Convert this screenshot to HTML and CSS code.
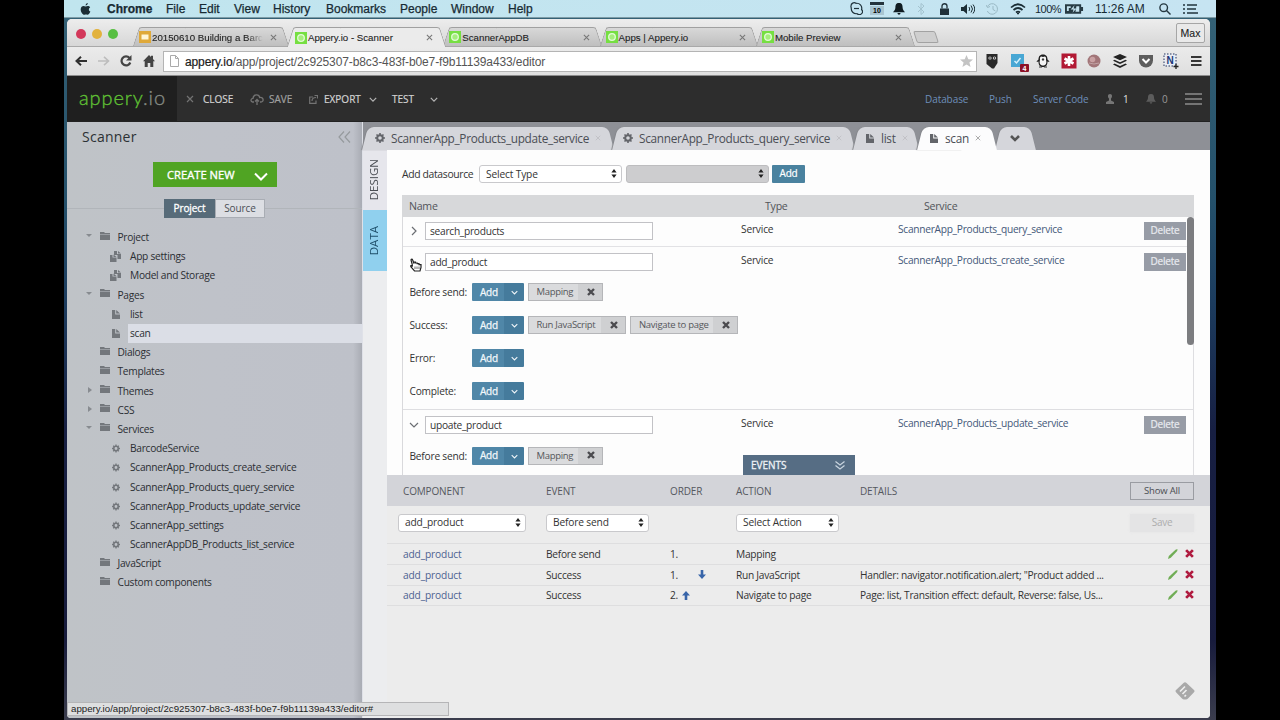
FILE: index.html
```html
<!DOCTYPE html>
<html lang="en">
<head>
<meta charset="utf-8">
<title>Appery.io - Scanner</title>
<link rel="stylesheet" href="styles.css">
</head>
<body>
<svg class="defs" aria-hidden="true">
  <symbol id="folder" viewBox="0 0 10 8"><path d="M0 0h4l1 1h5v1.500H0zM0 3h10v5H0z"/></symbol>
  <symbol id="pages" viewBox="0 0 11 11"><path d="M4 0h3v3h4v5H7.500V4H4zM0 4h2.500v2.500h4V11H0zM8 0l3 2.500H8zM3.500 3.500l3 2.500h-3z"/></symbol>
  <symbol id="page" viewBox="0 0 8 9"><path d="M0 0h3.200v4.500H8V9H0z"/><path d="M4.200 0L8 3.500H4.200z"/></symbol>
  <symbol id="gear" viewBox="0 0 10 10"><circle cx="5" cy="5" r="2.800" fill="none" stroke="currentColor" stroke-width="2"/><path d="M5 0v2M5 8v2M0 5h2M8 5h2M1.500 1.500l1.300 1.300M7.200 7.200l1.300 1.300M8.500 1.500L7.200 2.800M1.500 8.500l1.300-1.300" stroke="currentColor" stroke-width="1.600"/></symbol>
  <symbol id="down" viewBox="0 0 10 6"><path d="M1 1l4 4 4-4" fill="none" stroke="currentColor" stroke-width="1.500"/></symbol>
  <symbol id="cross" viewBox="0 0 8 8"><path d="M1 1l6 6M7 1L1 7" fill="none" stroke="currentColor" stroke-width="1.200"/></symbol>
  <symbol id="bigx" viewBox="0 0 8 8"><path d="M1 1l6 6M7 1L1 7" fill="none" stroke="currentColor" stroke-width="2.400"/></symbol>
  <symbol id="updown" viewBox="0 0 6 9"><path d="M3 0l2.600 3.600H.4zM3 9L.4 5.400h5.200z"/></symbol>
  <symbol id="pencil" viewBox="0 0 10 10"><path d="M0 10l.8-3L7.500.8 9.500 0 9.200 2 2.800 8.800z"/></symbol>
  <symbol id="fav" viewBox="0 0 12 12"><path d="M0 0h12v12H0z" fill="#76df42"/><circle cx="6" cy="6" r="3.300" fill="#a5ee7c" stroke="#e4fbd8" stroke-width="1.300"/></symbol>
  <symbol id="bell" viewBox="0 0 12 12"><path d="M6 0c3 0 3.600 2 3.600 4.500S11 8 12 9.300H0C1 8 2.400 7 2.400 4.500S3 0 6 0zM4.500 10h3c0 2.300-3 2.300-3 0z"/></symbol>
</svg>
<div class="desktop">
  <div class="menubar">
    <nav class="menus">
      <svg class="apple" viewBox="0 0 12 13"><path d="M8.500 0c0 1.500-1 2.700-2.400 2.800C6 1.300 7.200.2 8.500 0zM11.300 9.300C10.500 11.500 9.300 13 8 12.800c-.9-.4-2-.4-3 0C3 13.300.5 9.500.8 6.500 1 3.500 3.500 2.500 6.200 3.900c2-1.100 4-.6 4.900.7-2.100 1.400-1.800 3.800.2 4.700z"/></svg>
      <b>Chrome</b><span>File</span><span>Edit</span><span>View</span><span>History</span><span>Bookmarks</span><span>People</span><span>Window</span><span>Help</span>
    </nav>
    <div class="status">
      <svg width="13" height="13" viewBox="0 0 13 13" fill="none" stroke="#20333c" stroke-width="1.200"><path d="M1 4a3.200 3.200 0 0 1 5-2.700A5 5 0 0 1 11.600 7.500 3 3 0 0 1 7 11.700 5 5 0 0 1 1.300 6 3 3 0 0 1 1 4z"/><path d="M4 6.500h5"/></svg>
      <svg class="s-cal" width="14" height="13" viewBox="0 0 14 13"><path d="M0 0h14v3H0z" fill="#24343d"/><path d="M0 4h14v9H0z" fill="#a9c5d1"/><text x="7" y="10.500" text-anchor="middle">10</text></svg>
      <svg class="s-bell" width="12" height="12" fill="#101c22"><use href="#bell"/></svg>
      <svg class="s-bt" width="8" height="12" viewBox="0 0 8 12" fill="none" stroke="#a4c3cf"><path d="M1 3l6 6-3 2.500V.5L7 3 1 9"/></svg>
      <svg class="s-lock" width="9" height="12" viewBox="0 0 9 12"><path d="M0 5.500h9V12H0z" fill="#203039"/><path d="M2 5.500V3c0-3 5-3 5 0v2.500" fill="none" stroke="#203039" stroke-width="1.300"/></svg>
      <svg class="s-snd" width="14" height="10" viewBox="0 0 14 10"><path d="M0 3h2.500L6 0v10L2.500 7H0z" fill="#1b2d35"/><path d="M8 3q1.500 2 0 4M10 1.500q3 3.500 0 7M12 .5q3.500 4.500 0 9" fill="none" stroke="#1b2d35"/></svg>
      <svg class="s-clock" width="13" height="12" viewBox="0 0 13 12" fill="none" stroke="#9ab9c5"><path d="M1.500 3.500a5.300 5.300 0 1 1-.2 4.500M0 2l1.500 2.500L4 3.500M7 3v3.500l2.500 1.500"/></svg>
      <svg class="s-wifi" width="16" height="12" viewBox="0 0 16 12" fill="none" stroke="#1b2d35" stroke-width="1.700"><path d="M1 4.500q7-6.500 14 0M3.500 7q4.500-4 9 0M6 9.500q2-1.700 4 0"/><path d="M7 10.500h2"/></svg>
      <span class="pct">100%</span>
      <svg width="19" height="10" viewBox="0 0 20 10"><path d="M0 0h17v3h2v4h-2v3H0z" fill="#273b44"/><path d="M2 2h4v2H4v3H2M12 2h3v6h-4M10 1L6 5.500h3L8 9l4-4.500H9z" fill="#c3e1ed"/></svg>
      <span class="time">11:26 AM</span>
      <svg class="s-find" width="12" height="12" viewBox="0 0 12 12" fill="none" stroke="#243740" stroke-width="1.400"><circle cx="4.700" cy="4.700" r="3.800"/><path d="M7.500 7.500L11.500 11.500"/></svg>
      <svg class="s-list" width="15" height="10" viewBox="0 0 15 10" stroke="#20333c" stroke-width="1.500"><path d="M0 1h2M0 5h2M0 9h2M4 1h10M4 5h9M4 9h11"/></svg>
    </div>
  </div>

  <div class="window">
    <div class="tabstrip">
      <div class="lights"><i class="r"></i><i class="y"></i><i class="g"></i></div>
      <div class="btab t1"><svg class="fav" viewBox="0 0 12 12"><path d="M0 0h12v12H0z" fill="#dfa93a"/><path d="M2.500 3.500h7v5h-7z" fill="#fff6d8"/></svg><span class="fade">20150610 Building a Barc</span><svg class="x"><use href="#cross"/></svg></div>
      <div class="btab active"><svg class="fav"><use href="#fav"/></svg><span>Appery.io - Scanner</span><svg class="x"><use href="#cross"/></svg></div>
      <div class="btab"><svg class="fav"><use href="#fav"/></svg><span>ScannerAppDB</span><svg class="x"><use href="#cross"/></svg></div>
      <div class="btab"><svg class="fav"><use href="#fav"/></svg><span>Apps | Appery.io</span><svg class="x"><use href="#cross"/></svg></div>
      <div class="btab"><svg class="fav"><use href="#fav"/></svg><span>Mobile Preview</span><svg class="x"><use href="#cross"/></svg></div>
      <div class="newtab"></div>
      <div class="user">Max</div>
    </div>
    <div class="toolbar">
      <div class="nav">
        <svg width="12" height="10" viewBox="0 0 12 10" fill="none" stroke="#303030" stroke-width="2"><path d="M12 5H2M6 .8L1.500 5 6 9.200"/></svg>
        <svg width="12" height="10" viewBox="0 0 12 10" fill="none" stroke="#bdbdbd" stroke-width="1.600"><path d="M0 5h10M6 .8L10.500 5 6 9.200"/></svg>
        <svg width="12" height="12" viewBox="0 0 12 12"><path d="M9.500 3A4.500 4.500 0 1 0 10.300 7.500" fill="none" stroke="#444" stroke-width="2.200"/><path d="M11.500 0v5.500H6z" fill="#444"/></svg>
        <svg width="12" height="12" viewBox="0 0 12 12" fill="#444"><path d="M6 0l2 2V.7h2V4l2 2.200h-1.700V12H7.300V8H4.700v4H1.700V6.200H0z"/></svg>
      </div>
      <div class="url">
        <svg width="9" height="12" viewBox="0 0 9 12" fill="#fff" stroke="#aaa"><path d="M.5.5h5l3 3v8h-8zM5.500.5v3h3"/></svg>
        <span class="addr"><b>appery.io</b>/app/project/2c925307-b8c3-483f-b0e7-f9b11139a433/editor</span>
        <svg width="13" height="12" viewBox="0 0 13 12" fill="#c4c4c4"><path d="M6.500 0l1.800 4.200 4.700.3-3.600 2.900L10.600 12 6.500 9.400 2.400 12l1.200-4.600L0 4.500l4.700-.3z"/></svg>
      </div>
      <div class="exts">
        <svg viewBox="0 0 16 16"><path d="M2.500 1h11v9l-3.500 5.500H8L2.500 11z" fill="#292929"/><circle cx="6" cy="5" r="1.600" fill="#ddd"/><circle cx="10.500" cy="5" r="1.600" fill="#ddd"/><circle cx="6" cy="5" r=".7"/><circle cx="10.500" cy="5" r=".7"/></svg>
        <svg class="ov" viewBox="0 0 16 16"><path d="M1 1h13v13H1z" fill="#48a7d4"/><path d="M4.500 8l2 2 4-5" fill="none" stroke="#d6f0fb" stroke-width="1.500"/><rect x="10" y="11" width="9" height="8" rx="1" fill="#8c1127"/><text class="bad" x="14.500" y="17.500" text-anchor="middle">4</text></svg>
        <svg viewBox="0 0 16 16"><path d="M8 1.500c3.500 0 4.500 2.500 4.500 5 0 0 1.500 1 2 2.500l-2-.5c0 3-1 5.500-4.500 5.500s-4.500-2.500-4.500-5.500L1.500 9c.5-1.500 2-2.500 2-2.500 0-2.500 1-5 4.500-5z" fill="#1d1d1d"/><path d="M8 4c2.500-1.500 3.500.5 3 3 1 3 0 5.500-3 5.500S4 10 5 7c-.5-2.500.5-4.500 3-3z" fill="#f4f4f4"/><path d="M7 6h2L8 7.500zM4 14h3M9 14h3" fill="#222" stroke="#333"/></svg>
        <svg viewBox="0 0 16 16"><path d="M.5.500h15v15H.5z" fill="#b21934"/><path d="M8 3v10M3.500 5.500l9 5M12.500 5.500l-9 5" stroke="#fff" stroke-width="2.600"/></svg>
        <svg viewBox="0 0 16 16"><circle cx="8" cy="8" r="6.500" fill="#a27679"/><circle cx="6.500" cy="6.500" r="2.800" fill="#c9a1a3"/><path d="M3 10q5 2 10 0" stroke="#c2a3a5" fill="none"/></svg>
        <svg viewBox="0 0 16 16" fill="#242424"><path d="M8 1l7 3-7 3.200L1 4zM2.500 6.700L8 9.200l5.500-2.500L15 7.700 8 11 1 7.700zM2.500 10.400L8 12.900l5.500-2.500 1.500 1L8 15l-7-3.600z"/></svg>
        <svg viewBox="0 0 16 16"><path d="M1 2h14v5.500a7 7 0 0 1-14 0z" fill="#5d5d5d"/><path d="M4.500 6L8 9.500 11.500 6" fill="none" stroke="#fff" stroke-width="2"/></svg>
        <svg viewBox="0 0 16 16"><path d="M1 1h12v12H1z" fill="#e8edf5" stroke="#27355f" stroke-dasharray="1.500 1.500"/><text class="en" x="7.200" y="11" text-anchor="middle">N</text><path d="M13 11v5M10.500 13.500h5" stroke="#222" stroke-width="1.300"/></svg>
        <svg viewBox="0 0 16 16" stroke="#363636" stroke-width="2"><path d="M2 4h10.500M2 8h10.500M2 12h10.500"/></svg>
      </div>
    </div>

    <header class="apphead">
      <div class="logo">appery<span>.io</span></div>
      <div class="acts">
        <svg class="dim" width="8" height="8"><use href="#cross"/></svg><span class="a-close">CLOSE</span>
        <svg class="dim" width="14" height="11" viewBox="0 0 14 11" fill="none" stroke="currentColor" stroke-width="1.300"><path d="M4 8H2.500C.3 7.500.5 4.500 3 4.300 3.500 0 9 0 9.700 3.500 14 3 14 8 11 8h-1M7 11V5.500M5 7.500l2-2 2 2"/></svg><span class="a-save">SAVE</span>
        <svg class="dim" width="9" height="9" viewBox="0 0 9 9" fill="none" stroke="currentColor" stroke-width="1.200"><path d="M4 2H.700v6.300H7V5.500M3 6c0-3 2-3.500 4-3.500M5.500.5h3v3"/></svg><span class="a-exp">EXPORT</span>
        <svg class="dn" width="8" height="5"><use href="#down"/></svg><span class="a-test">TEST</span>
        <svg class="dn" width="8" height="5"><use href="#down"/></svg>
      </div>
      <div class="headlinks">
        <a class="h-db">Database</a><a class="h-push">Push</a><a class="h-sc">Server Code</a>
        <svg width="8" height="10" viewBox="0 0 8 10" fill="#767676"><path d="M4 0c2.500 0 2.500 3 1 4.500v2L8 8v2H0V8l3-1.500v-2C1.500 3 1.500 0 4 0z"/></svg><span class="h-1">1</span>
        <svg width="10" height="10" viewBox="0 0 12 12" fill="#5c5c5c"><use href="#bell" width="12" height="12"/></svg><span class="h-0">0</span>
        <svg width="17" height="14" viewBox="0 0 17 14" stroke="#747474" stroke-width="2"><path d="M0 2h17M0 7h17M0 12h17"/></svg>
      </div>
    </header>

    <div class="app">
      <aside class="side">
        <div class="sidetop"><h1>Scanner</h1><svg width="13" height="12" viewBox="0 0 13 12" fill="none" stroke="#969a9d" stroke-width="1.200"><path d="M6 .5L1 6l5 5.500M12 .5L7 6l5 5.500"/></svg></div>
        <div class="create"><span>CREATE NEW</span><svg width="14" height="9" viewBox="0 0 14 9" fill="none" stroke="#fff" stroke-width="2"><path d="M1 1.500l6 6 6-6"/></svg></div>
        <div class="toggle"><span class="on">Project</span><span>Source</span></div>
        <ul class="tree">
          <li class="l1 open"><svg><use href="#folder"/></svg><span>Project</span></li>
          <li class="l2 pp"><svg><use href="#pages"/></svg><span>App settings</span></li>
          <li class="l2 pp"><svg><use href="#pages"/></svg><span>Model and Storage</span></li>
          <li class="l1 open"><svg><use href="#folder"/></svg><span>Pages</span></li>
          <li class="l2"><svg><use href="#page"/></svg><span>list</span></li>
          <li class="l2 sel"><svg><use href="#page"/></svg><span>scan</span></li>
          <li class="l1"><svg><use href="#folder"/></svg><span>Dialogs</span></li>
          <li class="l1"><svg><use href="#folder"/></svg><span>Templates</span></li>
          <li class="l1 shut"><svg><use href="#folder"/></svg><span>Themes</span></li>
          <li class="l1 shut"><svg><use href="#folder"/></svg><span>CSS</span></li>
          <li class="l1 open"><svg><use href="#folder"/></svg><span>Services</span></li>
          <li class="l2"><svg><use href="#gear"/></svg><span>BarcodeService</span></li>
          <li class="l2"><svg><use href="#gear"/></svg><span>ScannerApp_Products_create_service</span></li>
          <li class="l2"><svg><use href="#gear"/></svg><span>ScannerApp_Products_query_service</span></li>
          <li class="l2"><svg><use href="#gear"/></svg><span>ScannerApp_Products_update_service</span></li>
          <li class="l2"><svg><use href="#gear"/></svg><span>ScannerApp_settings</span></li>
          <li class="l2"><svg><use href="#gear"/></svg><span>ScannerAppDB_Products_list_service</span></li>
          <li class="l1"><svg><use href="#folder"/></svg><span>JavaScript</span></li>
          <li class="l1"><svg><use href="#folder"/></svg><span>Custom components</span></li>
        </ul>
      </aside>

      <main class="main">
        <div class="etabs">
          <div class="etab e1"><svg class="ic"><use href="#gear"/></svg><span>ScannerApp_Products_update_service</span><svg class="ex faint"><use href="#cross"/></svg></div>
          <div class="etab e2"><svg class="ic"><use href="#gear"/></svg><span>ScannerApp_Products_query_service</span><svg class="ex faint"><use href="#cross"/></svg></div>
          <div class="etab e3"><svg class="ic pg"><use href="#page"/></svg><span>list</span><svg class="ex faint"><use href="#cross"/></svg></div>
          <div class="etab e4 cur"><svg class="ic pg"><use href="#page"/></svg><span>scan</span><svg class="ex"><use href="#cross"/></svg></div>
          <div class="etab e5"><svg width="10" height="7" viewBox="0 0 10 7" fill="none" stroke="#555" stroke-width="2.600"><path d="M1 1l4 4 4-4"/></svg></div>
        </div>
        <div class="work">
          <div class="modes"><div class="mode"><span>DESIGN</span></div><div class="mode data"><span>DATA</span></div></div>
          <div class="content">
            <section class="sources">
              <div class="adder"><span class="lbl">Add datasource</span><div class="select w142">Select Type<svg><use href="#updown"/></svg></div><div class="select off w143"><svg><use href="#updown"/></svg></div><div class="btn">Add</div></div>
              <div class="table">
                <div class="thead"><span>Name</span><span class="c-type">Type</span><span>Service</span></div>
                <div class="rows">
                  <div class="row"><svg class="right" viewBox="0 0 6 10"><path d="M1 1l4 4-4 4"/></svg><div class="field">search_products</div><span class="svc">Service</span><a>ScannerApp_Products_query_service</a><div class="del">Delete</div></div>
                  <div class="group">
                    <div class="row"><i></i><div class="field">add_product</div><span class="svc">Service</span><a>ScannerApp_Products_create_service</a><div class="del">Delete</div></div>
                    <div class="ev"><span>Before send:</span><div class="split">Add<svg><use href="#down"/></svg></div><div class="chip m">Mapping<svg><use href="#bigx"/></svg></div></div>
                    <div class="ev"><span>Success:</span><div class="split">Add<svg><use href="#down"/></svg></div><div class="chip js">Run JavaScript<svg><use href="#bigx"/></svg></div><div class="chip n">Navigate to page<svg><use href="#bigx"/></svg></div></div>
                    <div class="ev"><span>Error:</span><div class="split">Add<svg><use href="#down"/></svg></div></div>
                    <div class="ev"><span>Complete:</span><div class="split">Add<svg><use href="#down"/></svg></div></div>
                  </div>
                  <div class="row third"><svg class="dnv" viewBox="0 0 10 6"><path d="M1 1l4 4 4-4"/></svg><div class="field">upoate_product</div><span class="svc">Service</span><a>ScannerApp_Products_update_service</a><div class="del">Delete</div></div>
                  <div class="ev last"><span>Before send:</span><div class="split">Add<svg><use href="#down"/></svg></div><div class="chip m">Mapping<svg><use href="#bigx"/></svg></div></div>
                  <div class="thumb"></div>
                </div>
              </div>
              <div class="evtab"><span>EVENTS</span><svg width="10" height="9" viewBox="0 0 10 9" fill="none" stroke="#c9d5df" stroke-width="1.200"><path d="M.5.500L5 4 9.500.5M.5 4.500L5 8l4.500-3.500"/></svg></div>
            </section>
            <section class="events">
              <div class="erow ehead"><span>COMPONENT</span><span>EVENT</span><span>ORDER</span><span>ACTION</span><span>DETAILS</span><div class="showall">Show All</div></div>
              <div class="erow epick"><div class="select w127">add_product<svg><use href="#updown"/></svg></div><div class="select w103">Before send<svg><use href="#updown"/></svg></div><span></span><div class="select w103">Select Action<svg><use href="#updown"/></svg></div><span></span><div class="save">Save</div></div>
              <div class="erow"><a>add_product</a><span>Before send</span><span>1.</span><span>Mapping</span><span></span><div class="tools"><svg class="pen"><use href="#pencil"/></svg><svg class="rm"><use href="#bigx"/></svg></div></div>
              <div class="erow"><a>add_product</a><span>Success</span><span class="ord">1.<svg class="dwn" viewBox="0 0 8 9"><path d="M2.700 0h2.600v4.500H8L4 9 0 4.500h2.700z"/></svg></span><span>Run JavaScript</span><span>Handler: navigator.notification.alert; "Product added ...</span><div class="tools"><svg class="pen"><use href="#pencil"/></svg><svg class="rm"><use href="#bigx"/></svg></div></div>
              <div class="erow"><a>add_product</a><span>Success</span><span class="ord">2.<svg class="up" viewBox="0 0 8 9"><path d="M2.700 9h2.600V4.500H8L4 0 0 4.500h2.700z"/></svg></span><span>Navigate to page</span><span>Page: list, Transition effect: default, Reverse: false, Us...</span><div class="tools"><svg class="pen"><use href="#pencil"/></svg><svg class="rm"><use href="#bigx"/></svg></div></div>
              <svg class="feedly" viewBox="0 0 20 18"><path d="M8.500 1q1.500-1.500 3 0L19 8q1 1.200 0 2.300L13 16.500q-1 1-2 1H9q-1 0-2-1L1 10.300Q0 9 1 8z" fill="#a9a9a9"/><path d="M5 9.500l5-5M7.500 12l4-4M9.500 14.500l1.500-1.500" stroke="#eee" stroke-width="1.700"/></svg>
            </section>
          </div>
        </div>
      </main>
    </div>
    <div class="statusurl">appery.io/app/project/2c925307-b8c3-483f-b0e7-f9b11139a433/editor#</div>
  </div>
  <svg class="hand" viewBox="0 0 12 13"><path d="M2 5L1 1.500C1 .3 2.300.3 2.700 1.500L4 5V3.500h1.500v1h1.700v.7H9v1h2V9l-1 3.500H4.500L1 8.500C0 7 1.500 6.500 2.500 8z" fill="#fff" stroke="#222" stroke-width="1.200"/><path d="M5 8v2.500M7 8v2.500M9 8v2.500" stroke="#444" stroke-width=".8"/></svg>
</div>
</body>
</html>
```

FILE: styles.css
```css
* { box-sizing: border-box; }
body { margin: 0; width: 1280px; height: 720px; overflow: hidden; background: #000; font: 10.6px "Open Sans", "Noto Sans", sans-serif; color: #333; }
svg { flex: none; display: block; }
.defs { position: absolute; width: 0; height: 0; }
.desktop { position: relative; width: 1152px; height: 720px; margin: 0 64px; overflow: hidden; background: linear-gradient(#356276 0, #24506a 200px, #1c3c5e 300px, #171f42 430px, #171b3c 640px, #3b3d4d); display: flex; flex-direction: column; }
.menubar { height: 18px; background: linear-gradient(90deg, #c0e5ee, #c6e4f2); border-bottom: 1px solid #7f9ca6; display: flex; justify-content: space-between; font: 12px/18px "Liberation Sans", Arial, sans-serif; color: #172a33; -webkit-text-stroke: .25px #172a33; }
.menus { display: grid; grid-template-columns: 43px 59px 33px 35px 39px 53px 74px 51px 57px 40px; white-space: nowrap; }
.apple { width: 11px; height: 12px; margin: 3px 0 0 16px; fill: #1c2d35; }
.status { display: flex; align-items: center; margin-right: 18px; white-space: nowrap; -webkit-text-stroke: 0; }
.s-cal { margin-left: 7px; }
.s-cal text { font: bold 7px "Liberation Sans", sans-serif; }
.s-bell { margin-left: 9px; }
.s-bt { margin-left: 12px; }
.s-lock { margin-left: 15px; }
.s-snd { margin-left: 12px; }
.s-clock { margin-left: 11px; }
.s-wifi { margin-left: 11px; }
.pct { font-size: 11px; margin: 0 4px 0 9px; width: 26px; letter-spacing: -.5px; }
.time { margin-left: 11px; width: 50px; }
.s-find { margin-left: 14px; }
.s-list { margin-left: 12px; }

.window { position: relative; width: 1143px; height: 699px; margin: 1px 0 0 3px; border-radius: 5px 5px 4px 4px; overflow: hidden; background: #ececec; display: flex; flex-direction: column; }
.tabstrip { height: 28px; background: linear-gradient(#ededed, #d7d7d7); border-bottom: 1px solid #a9a9a9; display: flex; align-items: flex-end; font: 9.700px "Liberation Sans", Arial, sans-serif; color: #1c1c1c; -webkit-text-stroke: .1px #222; }
.lights { display: flex; gap: 6px; align-self: center; width: 67px; padding: 3px 0 0 9px; }
.lights i { width: 10px; height: 10px; border-radius: 50%; }
.r { background: #d3385a; } .y { background: #e2b23d; } .g { background: #57bf42; }
.btab { position: relative; z-index: 0; width: 156.300px; height: 19px; padding: 1px 11px 0 5px; display: flex; align-items: center; white-space: nowrap; }
.btab::before, .btab::after { content: ""; position: absolute; z-index: -1; top: 0; bottom: 0; border-top: 1px solid #a0a0a0; background: linear-gradient(#d8d8d8, #bfbfbf); }
.btab::before { left: 2px; right: 35%; transform: skewX(-18deg); border-left: 1px solid #a0a0a0; border-radius: 3px 0 0 0; }
.btab::after { right: 2px; left: 35%; transform: skewX(18deg); border-right: 1px solid #a0a0a0; border-radius: 0 3px 0 0; }
.btab.t1 { width: 154px; }
.btab.active { height: 20px; margin-bottom: -1px; z-index: 1; padding-left: 7px; }
.btab.active::before, .btab.active::after { background: #ebebeb; }
.btab .fav { width: 12px; height: 12px; margin-right: 1px; }
.btab .x { width: 7px; height: 7px; color: #777; margin-left: auto; }
.fade { -webkit-mask-image: linear-gradient(90deg, #000 85%, transparent); }
.newtab { width: 22px; height: 12px; margin: 0 0 3px 2px; border: 1px solid #a2a2a2; background: #cfcfcf; border-radius: 2px; transform: skewX(18deg); }
.user { margin: 0 5px 3px auto; width: 29px; height: 20px; border: 1px solid #a6a6a6; border-radius: 2px; background: #e9e9e9; line-height: 19px; text-align: center; font-size: 10.500px; }
.toolbar { height: 29px; background: linear-gradient(#ebebeb, #dfdfdf); border-bottom: 1px solid #8c8c8c; display: flex; align-items: center; }
.nav { display: flex; gap: 10.500px; padding-left: 8px; width: 96px; align-items: center; }
.url { width: 814px; height: 21px; background: #fff; border: 1px solid #b4b4b4; display: flex; align-items: center; padding: 0 3px 0 6px; font: 12px "Liberation Sans", Arial, sans-serif; color: #555; }
.addr { margin: 1px auto 0 6px; letter-spacing: -.115px; white-space: nowrap; }
.addr b { font-weight: normal; color: #1a1a1a; -webkit-text-stroke: .2px #222; }
.exts { display: flex; gap: 9.600px; padding-left: 7px; }
.exts svg { width: 16px; height: 16px; }
.exts .ov { overflow: visible; }
.bad { font: bold 7px "Liberation Sans", sans-serif; fill: #fff; }
.en { font: bold 10px "Liberation Sans", sans-serif; fill: #203777; }

.apphead { height: 46px; flex: none; background: #2d2d2d; display: flex; color: #d2d2d2; border-bottom: 1px solid #222; }
.logo { width: 110px; background: #1f1f1f; padding-left: 12px; font: 20px/43px Lato, sans-serif; font-weight: 300; letter-spacing: .9px; color: #5fc034; -webkit-text-stroke: .35px; white-space: nowrap; }
.logo span { color: #858b84; }
.acts { display: flex; align-items: center; padding: 1px 0 0 9px; font-size: 10px; -webkit-text-stroke: .2px; white-space: nowrap; }
.dim { color: #737373; }
.dn { color: #b5b5b5; }
.a-close { margin-left: 9px; width: 47px; }
.a-save { margin-left: 5px; width: 40px; color: #a0a0a0; }
.a-exp { margin-left: 6px; width: 45px; }
.a-test { margin-left: 15px; width: 38px; }
.headlinks { margin-left: auto; display: flex; align-items: center; padding-right: 8px; font-size: 10px; white-space: nowrap; }
.headlinks a { color: #6d8fba; letter-spacing: -.08px; }
.h-db { width: 64px; } .h-push { width: 44px; } .h-sc { width: 73px; }
.h-1 { margin-left: 9px; width: 23px; color: #e0e0e0; } .h-0 { margin-left: 6px; width: 23px; color: #999; }

.app { flex: 1; min-height: 0; display: flex; }
.side { width: 296px; background: linear-gradient(90deg, #bfc3c7, #bfc2c9 50%, #bec1c9 97%, #a9acb4 100%); border-right: 1px solid #dfe1e8; }
.sidetop { display: flex; justify-content: space-between; padding: 5px 11px 0 15px; height: 40px; }
.sidetop h1 { margin: 0; font-size: 14px; line-height: 19px; font-weight: 400; color: #2c3134; letter-spacing: .25px; }
.sidetop svg { margin-top: 4px; }
.create { width: 124px; height: 25px; margin-left: 86px; background: #50a423; color: #fff; display: flex; align-items: center; padding: 0 9px 0 14px; justify-content: space-between; font-size: 11.200px; -webkit-text-stroke: .35px #fff; white-space: nowrap; }
.create svg { margin-top: 3px; }
.toggle { display: flex; align-items: center; margin-top: 12px; padding: 0; }
.toggle::before { content: ""; width: 97px; height: 1px; background: #b1b5ba; }
.toggle::after { content: ""; flex: 1; height: 1px; background: #b1b5ba; }
.toggle span { width: 50px; height: 19px; line-height: 17px; text-align: center; background: #dcdee3; color: #4b4f55; border: 1px solid #a9adb4; font-size: 10px; letter-spacing: -.1px; }
.toggle .on { width: 51px; background: #576b79; color: #fff; border-color: #576b79; -webkit-text-stroke: .3px #fff; }
.tree { list-style: none; margin: 10px 0 0; padding: 0; font-size: 10.200px; letter-spacing: -.28px; }
.tree li { position: relative; height: 19.200px; line-height: 19px; display: flex; align-items: center; white-space: nowrap; color: #2b2e33; }
.tree svg { fill: #73777c; color: #73777c; width: 8px; height: 9px; }
.l1 { padding-left: 33px; } .tree .l1 svg { width: 10px; height: 8px; margin: -4px 7.500px 0 0; }
.l2 { padding-left: 45px; } .l2 svg { margin-right: 10px; }
.tree .pp { padding-left: 43px; } .tree .pp svg { width: 11px; height: 11px; margin-right: 9px; }
.open::before, .shut::before { content: ""; position: absolute; left: 19px; top: 6px; border: 3px solid transparent; border-top: 3px solid #878b90; }
.shut::before { left: 21px; top: 5px; border: 3px solid transparent; border-left: 4px solid #878b90; }
.sel span { flex: 1; background: #dbdee6; margin-left: -2px; padding-left: 2px; }

.main { flex: 1; display: flex; flex-direction: column; min-width: 0; }
.etabs { height: 28px; flex: none; background: #8e9096; display: flex; align-items: flex-end; font-size: 11.800px; letter-spacing: -.3px; color: #4b4e55; }
.etab { position: relative; z-index: 0; height: 23px; display: flex; align-items: center; white-space: nowrap; padding: 0 0 1px 12px; }
.etab::before, .etab::after { content: ""; position: absolute; z-index: -1; top: 0; bottom: 0; background: #d5d6db; }
.etab::before { left: 2px; right: 40%; transform: skewX(-14deg); border-radius: 6px 0 0 0; box-shadow: -1px 0 1px #85878c; }
.etab::after { right: 2px; left: 40%; transform: skewX(14deg); border-radius: 0 6px 0 0; }
.cur::before, .cur::after { background: #fcfcfd; }
.cur { z-index: 1; }
.e1 { width: 250px; } .e2 { width: 241px; padding-left: 10px; } .e3 { width: 64px; } .e4 { width: 78px; } .e5 { width: 39px; padding-left: 14px; }
.ic { width: 10px; height: 10px; margin-right: 6px; color: #63656a; fill: #63656a; }
.etab .pg { width: 8px; height: 9px; margin-right: 7px; }
.ex { width: 6px; height: 6px; color: #a3a3a3; margin-left: 6px; }
.faint { color: #bfc0c4; }
.work { flex: 1; min-height: 0; display: flex; }
.modes { width: 24px; background: #ecedef; flex: none; }
.mode { height: 60px; background: #e6e6ec; display: flex; align-items: center; justify-content: center; }
.mode span { writing-mode: vertical-rl; transform: rotate(180deg); font-size: 11.500px; line-height: 14px; color: #4a4d53; margin-right: 2px; }
.mode.data { height: 61px; background: #90d0ee; }
.mode.data span { color: #1e4e69; }
.content { flex: 1; min-width: 0; display: flex; flex-direction: column; }
.sources { position: relative; height: 325px; flex: none; background: #fdfdfd; padding: 15px 16px 0 15px; overflow: hidden; }
.adder { display: flex; align-items: center; height: 18px; }
.lbl { width: 77px; white-space: nowrap; font-size: 10.400px; letter-spacing: -.35px; }
.select { height: 18px; background: #fff; border: 1px solid #c9c9cc; border-radius: 3px; display: flex; align-items: center; justify-content: space-between; padding: 0 4px 1px 6px; white-space: nowrap; font-size: 10.200px; letter-spacing: -.15px; }
.select svg { width: 6px; height: 9px; fill: #222; margin-left: auto; }
.off { background: #cdcdcf; border-color: #bdbdbf; margin-left: 4px; }
.w142 { width: 143px; } .w143 { width: 143px; } .w127 { width: 128px; } .w103 { width: 103px; }
.btn { margin-left: 3px; width: 33px; height: 18px; background: #4a829f; color: #fff; border-radius: 1px; text-align: center; line-height: 17px; font-size: 10px; letter-spacing: -.2px; -webkit-text-stroke: .2px #fff; }
.table { margin-top: 12px; border-left: 1px solid #d9d9dc; border-right: 1px solid #dedee1; }
.thead { height: 22px; background: #d7d8da; display: grid; grid-template-columns: 356px 159px 1fr; align-items: center; margin: 0 -1px; padding-left: 7px; color: #515459; letter-spacing: -.25px; }
.rows { position: relative; height: 265px; }
.row { display: grid; grid-template-columns: 16px 228px 88px 157px 1fr 42px; height: 30px; padding: 0 7px 2px 6px; align-items: center; border-bottom: 1px solid #e2e2e5; font-size: 10.200px; letter-spacing: -.28px; white-space: nowrap; }
.row .right { width: 6px; height: 10px; margin-left: 2px; } .row .dnv { width: 10px; height: 6px; }
.row path { fill: none; stroke: #6b6e73; stroke-width: 1.200; }
.svc { margin-top: -4px; padding: 0; grid-column: 4; letter-spacing: -.2px; }
.row a { grid-column: 5; color: #445879; margin-top: -4px; }
.field { height: 18px; border: 1px solid #c2c2c6; background: #fff; line-height: 17px; padding-left: 4px; }
.del { height: 18px; background: #979ca6; color: #e9ebf0; text-align: center; line-height: 17px; font-size: 10px; letter-spacing: -.2px; -webkit-text-stroke: .2px; }
.group { height: 163px; border-bottom: 1px solid #dedee1; }
.group .row, .third { border-bottom: 0; padding-top: 1px; padding-bottom: 1px; }
.ev { height: 32.900px; display: flex; align-items: center; padding-left: 6.500px; font-size: 10.200px; letter-spacing: -.22px; white-space: nowrap; }
.group .row { height: 29px; }
.ev > span { width: 62.500px; }
.split { width: 52px; height: 18px; border-radius: 1px; background: linear-gradient(90deg, #5087a8 32px, #457b9c 32px); color: #f3f8fb; display: flex; align-items: center; padding: 0 6px 1px 8px; justify-content: space-between; -webkit-text-stroke: .25px; font-size: 10px; }
.split svg { width: 7px; height: 5px; margin-top: 2px; }
.chip { height: 18px; margin-left: 4px; background: linear-gradient(90deg, #dadbdd calc(100% - 24px), #cfd0d2 calc(100% - 24px)); border: 1px solid #b5b6b9; display: flex; align-items: center; justify-content: space-between; padding: 0 7px 1px 7.500px; font-size: 9.500px; letter-spacing: -.3px; color: #55575b; }
.chip svg { width: 8px; height: 8px; color: #4b4b4f; }
.m { width: 75px; } .js { width: 98px; } .n { width: 108px; padding-left: 8px; }
.third { height: 30px; }
.last { height: 31px; }
.thumb { position: absolute; right: -1px; top: 0; width: 7px; height: 128px; border-radius: 4px; background: #7c7d80; }
.evtab { position: absolute; left: 356px; bottom: 0; width: 112px; height: 20px; background: #566d84; color: #eef2f6; display: flex; align-items: center; justify-content: space-between; padding: 0 10px 0 8px; font-size: 10px; -webkit-text-stroke: .3px; }
.events { flex: 1; background: #ececec; position: relative; }
.erow { display: grid; grid-template-columns: 143px 124px 66px 124px 1fr 64px; align-items: center; height: 20.800px; padding: 0 16px; border-bottom: 1px solid #dededf; white-space: nowrap; font-size: 10.200px; letter-spacing: -.27px; }
.erow a { color: #4c6291; letter-spacing: -.15px; }
.ehead { height: 31px; background: #d3d4d9; border: 0; color: #55585e; font-size: 10px; letter-spacing: -.15px; }
.epick { height: 38px; padding-bottom: 4px; }
.epick .w127 { margin-left: -5px; }
.showall { border: 1px solid #9a9ca2; height: 18px; text-align: center; line-height: 16px; font-size: 9.500px; color: #4a4d52; }
.save { background: #e4e4e5; color: #adadad; height: 18px; text-align: center; line-height: 17px; box-shadow: 0 0 3px #e4e4e5; font-size: 10px; }
.tools { display: flex; gap: 7px; justify-content: flex-end; }
.pen { width: 10px; height: 10px; fill: #70ad55; } .rm { width: 9px; height: 9px; color: #b01c40; }
.ord { display: flex; align-items: center; }
.ord svg { width: 8px; height: 9px; fill: #3865a9; } .dwn { margin-left: 20px; } .up { margin-left: 4px; }
.feedly { position: absolute; right: 15px; bottom: 18px; width: 20px; height: 18px; }
.statusurl { position: absolute; left: 0; bottom: 2px; width: 382px; height: 14px; background: #dedfe0; border: 1px solid #b5b5b7; font: 9.700px/12px "Liberation Sans", Arial, sans-serif; padding-left: 3px; color: #222; white-space: nowrap; }
.hand { position: absolute; left: 346px; top: 258px; width: 12px; height: 14px; }
```
